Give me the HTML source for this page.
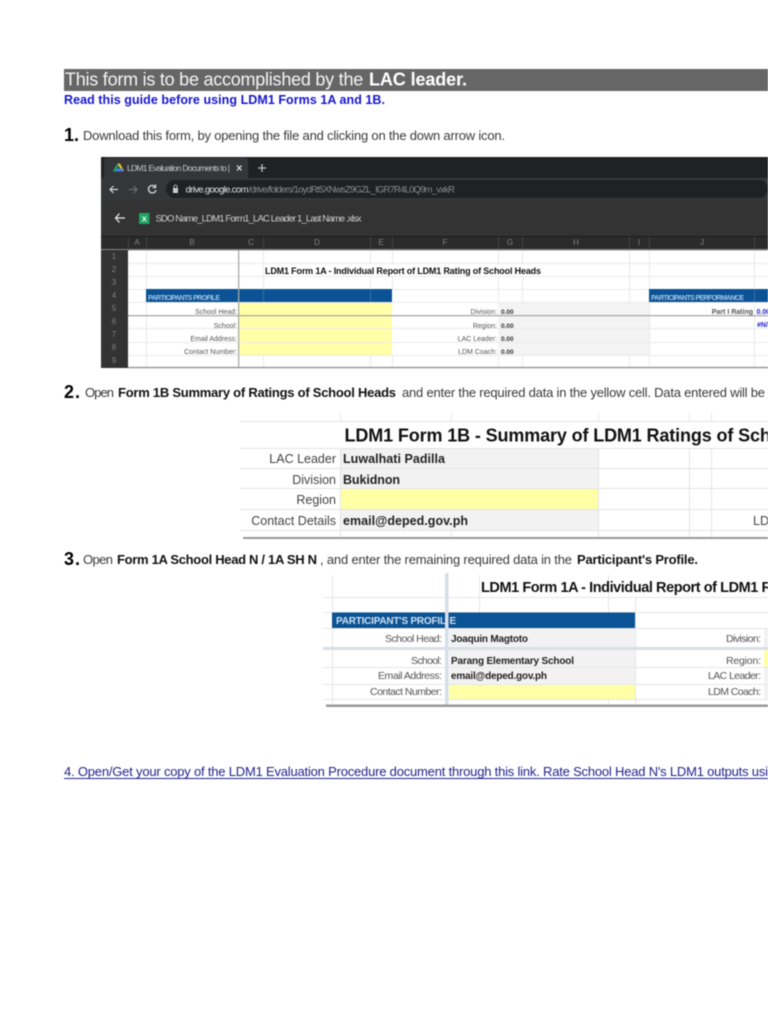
<!DOCTYPE html>
<html lang="en">
<head>
<meta charset="utf-8">
<title>LDM1 Guide</title>
<style>
html,body{margin:0;padding:0;background:#fff;width:768px;height:1024px;overflow:hidden}
svg{display:block;filter:blur(.42px)}
text{font-family:"Liberation Sans",Arial,sans-serif;white-space:pre}
.b{font-weight:bold}
.t{font-size:13px;fill:#3a3a3a}
.d{font-size:13px;fill:#111;font-weight:bold}
.n{font-size:18px;fill:#000;font-weight:bold}
.h{font-size:8px;fill:#808080;text-anchor:middle}
.l1{font-size:7px;fill:#555;text-anchor:end}
.l2{font-size:12.5px;fill:#444;text-anchor:end}
.v2{font-size:12.5px;fill:#222;font-weight:bold}
.l3{font-size:10.5px;fill:#555;text-anchor:end}
.v3{font-size:10px;fill:#222;font-weight:bold}
</style>
</head>
<body>
<svg width="768" height="1024" viewBox="0 0 768 1024" xmlns="http://www.w3.org/2000/svg">
<rect width="768" height="1024" fill="#fff"/>

<!-- Heading -->
<rect x="64" y="69" width="704" height="22" fill="#666"/>
<text x="65" y="85.500" font-size="18" fill="#f4f4f4" textLength="303" lengthAdjust="spacing">This form is to be accomplished by the </text>
<text x="369" y="85.500" font-size="18" fill="#fff" class="b" textLength="98" lengthAdjust="spacing">LAC leader.</text>
<text x="64" y="104" font-size="12.500" fill="#1616cc" class="b" textLength="321" lengthAdjust="spacing">Read this guide before using LDM1 Forms 1A and 1B.</text>

<!-- Step 1 -->
<text x="64" y="141" class="n" textLength="15" lengthAdjust="spacing">1.</text>
<text x="83" y="140" class="t" textLength="422" lengthAdjust="spacing">Download this form, by opening the file and clicking on the down arrow icon.</text>

<!-- Screenshot 1: browser -->
<rect x="101" y="157" width="667" height="211" fill="#fff"/>
<rect x="101" y="157" width="667" height="21" fill="#202124"/>
<path d="M104 178V161q0-3 3-3H245q3 0 3 3V178Z" fill="#35363a"/>
<path d="M117.500 163.500H120L124 171H121.500Z" fill="#f6c026"/>
<path d="M114.500 171.500H123.500L122 168.500H116.200Z" fill="#3f7fe8"/>
<path d="M117.500 163.500L113 171L114.500 172L118.800 165.500Z" fill="#1da462"/>
<text x="127" y="171" font-size="8.500" fill="#c9c9c9" textLength="103" lengthAdjust="spacing">LDM1 Evaluation Documents to |</text>
<path d="M237 165.500L241.500 170.500M241.500 165.500L237 170.500" stroke="#ddd" stroke-width="1.300"/>
<path d="M258 168H266M262 164V172" stroke="#bbb" stroke-width="1.300" fill="none"/>

<rect x="101" y="178" width="667" height="22" fill="#35363a"/>
<rect x="166" y="180" width="602" height="18" rx="9" fill="#202124"/>
<path d="M118 189.500H110M113.500 186L110 189.500L113.500 193" stroke="#d8d8d8" stroke-width="1.200" fill="none"/>
<path d="M129 189.500H137M133.500 186L137 189.500L133.500 193" stroke="#6e6e6e" stroke-width="1.200" fill="none"/>
<path d="M155 186.500A3.800 3.800 0 1 0 156 190M155.500 184.500V187.500H152.500" stroke="#d8d8d8" stroke-width="1.300" fill="none"/>
<rect x="173" y="188" width="5" height="5" fill="#ccc"/>
<path d="M174 188V186.500a1.500 1.500 0 0 1 3 0V188" stroke="#ccc" stroke-width=".8" fill="none"/>
<text x="185.500" y="192.500" font-size="9.500" fill="#e2e2e2" textLength="63" lengthAdjust="spacing">drive.google.com</text>
<text x="248.500" y="192.500" font-size="9.500" fill="#8a8b8e" textLength="206.500" lengthAdjust="spacing">/drive/folders/1oydRt5XNwsZ9GZL_IGR7R4L0Q9m_vxkR</text>

<rect x="101" y="200" width="667" height="36" fill="#333"/>
<path d="M125 218H115.500M119.500 213.500L115.500 218L119.500 222.500" stroke="#eee" stroke-width="1.200" fill="none"/>
<rect x="139" y="213" width="10.500" height="11" fill="#1ea362"/>
<text x="144.200" y="221.500" font-size="7.500" fill="#fff" text-anchor="middle" class="b">X</text>
<text x="155.500" y="221.500" font-size="9.500" fill="#cfcfcf" textLength="206" lengthAdjust="spacing">SDO Name_LDM1 Form1_LAC Leader 1_Last Name .xlsx</text>

<!-- Column headers -->
<rect x="101" y="236" width="667" height="14" fill="#2b2b2b"/>
<rect x="101" y="236" width="667" height="1" fill="#1c1c1c"/>
<rect x="101" y="249" width="667" height="1.500" fill="#888"/>
<g stroke="#444" stroke-width="1">
<path d="M128.500 237V250M146.500 237V250M263.500 237V250M370.500 237V250M392.500 237V250M498.500 237V250M522.500 237V250M629.500 237V250M649.500 237V250M754.500 237V250"/>
</g>
<text class="h" x="137" y="245">A</text><text class="h" x="192" y="245">B</text><text class="h" x="251" y="245">C</text><text class="h" x="317" y="245">D</text><text class="h" x="381" y="245">E</text><text class="h" x="445" y="245">F</text><text class="h" x="510" y="245">G</text><text class="h" x="576" y="245">H</text><text class="h" x="639" y="245">I</text><text class="h" x="702" y="245">J</text>

<!-- Row headers -->
<rect x="101" y="250" width="27" height="118" fill="#333"/>
<text class="h" x="114" y="259">1</text><text class="h" x="114" y="272">2</text><text class="h" x="114" y="285">3</text><text class="h" x="114" y="298">4</text><text class="h" x="114" y="311">5</text><text class="h" x="114" y="324">6</text><text class="h" x="114" y="337">7</text><text class="h" x="114" y="350">8</text><text class="h" x="114" y="363">9</text>

<!-- Sheet fills -->
<rect x="498" y="302" width="151" height="53" fill="#f3f3f3"/>
<rect x="238" y="302" width="154" height="53" fill="#ffffa8"/>
<rect x="146" y="289" width="246" height="13" fill="#0b5394"/>
<rect x="649" y="289" width="119" height="13" fill="#0b5394"/>
<g stroke="#eaeaea" stroke-width="1" fill="none">
<path d="M128 263.500H768M128 276.500H768M128 289.500H146M392 289.500H649M128 302.500H768M128 328.500H768M128 342.500H768M128 355.500H768"/>
<path d="M146.500 250V289M146.500 302V368M263.500 250V289M263.500 355V368M370.500 250V263M370.500 276V289M370.500 355V368M392.500 250V263M392.500 276V289M392.500 355V368M498.500 250V263M498.500 276V302M498.500 355V368M522.500 250V263M522.500 276V302M522.500 355V368M629.500 250V302M629.500 355V368M649.500 250V289M649.500 302V368M754.500 250V289M754.500 302V368"/>
</g>
<path d="M263.500 289V302M370.500 289V302M754.500 289V302" stroke="#3f78ad" stroke-width=".8"/>
<rect x="128" y="315" width="640" height="1.300" fill="#aaa"/>
<rect x="238" y="250" width="1.300" height="118" fill="#aaa"/>
<rect x="128" y="366.800" width="640" height="1.500" fill="#999"/>

<!-- Sheet text -->
<text x="265" y="274" font-size="9" fill="#111" class="b" textLength="276" lengthAdjust="spacing">LDM1 Form 1A - Individual Report of LDM1 Rating of School Heads</text>
<text x="148" y="300" font-size="7" fill="#a4c6ea" class="b" textLength="72" lengthAdjust="spacing">PARTICIPANTS PROFILE</text>
<text x="651" y="300" font-size="7" fill="#a4c6ea" class="b" textLength="93" lengthAdjust="spacing">PARTICIPANTS PERFORMANCE</text>
<text class="l1" x="237" y="314">School Head:</text><text class="l1" x="237" y="328">School:</text><text class="l1" x="237" y="341">Email Address:</text><text class="l1" x="237" y="354">Contact Number:</text>
<text class="l1" x="497" y="314">Division:</text><text class="l1" x="497" y="328">Region:</text><text class="l1" x="497" y="341">LAC Leader:</text><text class="l1" x="497" y="354">LDM Coach:</text>
<g font-size="6.500" fill="#333" class="b">
<text x="501" y="314">0.00</text><text x="501" y="328">0.00</text><text x="501" y="341">0.00</text><text x="501" y="354">0.00</text>
</g>
<text class="l1 b" x="753" y="314">Part I Rating</text>
<text x="756.500" y="314" font-size="7" fill="#2222cc" class="b">0.00</text>
<text x="757" y="327" font-size="7" fill="#2222cc" class="b">#N/A</text>

<!-- Step 2 -->
<text x="64" y="398" class="n" textLength="16" lengthAdjust="spacing">2.</text>
<text x="85" y="397" class="t" textLength="29" lengthAdjust="spacing">Open</text>
<text x="118" y="397" class="d" textLength="278" lengthAdjust="spacing">Form 1B Summary of Ratings of School Heads</text>
<text x="402" y="397" class="t" textLength="363" lengthAdjust="spacing">and enter the required data in the yellow cell. Data entered will be</text>

<!-- Screenshot 2 -->
<rect x="340" y="448" width="258" height="82" fill="#f2f2f2"/>
<rect x="340" y="488.500" width="258" height="20.500" fill="#ffffa6"/>
<g stroke="#e4e4e4" stroke-width="1" fill="none">
<path d="M240 421.500H768M240 448.500H768M240 468.500H768M240 488.500H768M240 509.500H768M240 530.500H768"/>
<path d="M340.500 413V421M451.500 413V421M598.500 413V421M689.500 413V421M711.500 413V421M340.500 448V537M451.500 530V537M598.500 448V537M689.500 448V537M711.500 448V537"/>
</g>
<rect x="243" y="537" width="525" height="2" fill="#999"/>
<text x="344.500" y="441.500" font-size="18" fill="#111" class="b" textLength="453" lengthAdjust="spacing">LDM1 Form 1B - Summary of LDM1 Ratings of School</text>
<text class="l2" x="336" y="463">LAC Leader</text><text class="l2" x="336" y="484">Division</text><text class="l2" x="336" y="504">Region</text><text class="l2" x="336" y="525">Contact Details</text>
<text class="v2" x="343" y="463" textLength="102" lengthAdjust="spacing">Luwalhati Padilla</text>
<text class="v2" x="343" y="484" textLength="57" lengthAdjust="spacing">Bukidnon</text>
<text class="v2" x="343" y="525" textLength="125" lengthAdjust="spacing">email@deped.gov.ph</text>
<text x="753" y="525" font-size="12.500" fill="#444">LDM</text>

<!-- Step 3 -->
<text x="64" y="565" class="n" textLength="16" lengthAdjust="spacing">3.</text>
<text x="83" y="564" class="t" textLength="30" lengthAdjust="spacing">Open</text>
<text x="117" y="564" class="d" textLength="200" lengthAdjust="spacing">Form 1A School Head N / 1A SH N</text>
<text x="320" y="564" class="t" textLength="252" lengthAdjust="spacing">, and enter the remaining required data in the</text>
<text x="577" y="564" class="d" textLength="121" lengthAdjust="spacing">Participant's Profile.</text>

<!-- Screenshot 3 -->
<rect x="449" y="628" width="186" height="71" fill="#f2f2f2"/>
<rect x="449" y="684" width="186" height="15.500" fill="#ffffa6"/>
<rect x="764" y="628" width="4" height="71" fill="#f2f2f2"/>
<rect x="764" y="650" width="4" height="17" fill="#ffffa6"/>
<g stroke="#e6e6e6" stroke-width="1" fill="none">
<path d="M323 597.500H768M323 612.500H768M323 628.500H768M323 667.500H768M323 684.500H768M323 699.500H768"/>
<path d="M332.500 575V704M479.500 575V612M608.500 575V612M635.500 597V704M608.500 699V704"/>
</g>
<rect x="332" y="612.500" width="303" height="15.500" fill="#0b5394"/>
<rect x="323" y="647" width="445" height="3" fill="#d8dfe8"/>
<rect x="445" y="573" width="3.500" height="133" fill="#d8dfe8"/>
<rect x="326" y="704.500" width="442" height="2.500" fill="#999"/>
<text x="481" y="592" font-size="14.500" fill="#111" class="b" textLength="291" lengthAdjust="spacing">LDM1 Form 1A - Individual Report of LDM1 R</text>
<text x="336" y="624" font-size="10" fill="#cfe0f0" class="b" textLength="110" lengthAdjust="spacing">PARTICIPANT'S PROFIL</text>
<text x="449.500" y="624" font-size="10" fill="#cfe0f0" class="b">E</text>
<text class="l3" x="442" y="642" textLength="57" lengthAdjust="spacing">School Head:</text><text class="l3" x="442" y="664" textLength="31" lengthAdjust="spacing">School:</text><text class="l3" x="442" y="679" textLength="64" lengthAdjust="spacing">Email Address:</text><text class="l3" x="442" y="695" textLength="72" lengthAdjust="spacing">Contact Number:</text>
<text class="l3" x="761" y="642" textLength="35" lengthAdjust="spacing">Division:</text><text class="l3" x="761" y="664" textLength="35" lengthAdjust="spacing">Region:</text><text class="l3" x="761" y="679" textLength="53" lengthAdjust="spacing">LAC Leader:</text><text class="l3" x="761" y="695" textLength="53" lengthAdjust="spacing">LDM Coach:</text>
<text class="v3" x="451" y="642" textLength="77" lengthAdjust="spacing">Joaquin Magtoto</text>
<text class="v3" x="451" y="664" textLength="123" lengthAdjust="spacing">Parang Elementary School</text>
<text class="v3" x="451" y="679" textLength="96" lengthAdjust="spacing">email@deped.gov.ph</text>

<!-- Step 4 -->
<text x="64" y="776" font-size="13" fill="#22228c" textLength="704" lengthAdjust="spacing">4. Open/Get your copy of the LDM1 Evaluation Procedure document through this link. Rate School Head N's LDM1 outputs usi</text>
<rect x="64" y="778" width="704" height="1" fill="#22228c"/>
</svg>
</body>
</html>
